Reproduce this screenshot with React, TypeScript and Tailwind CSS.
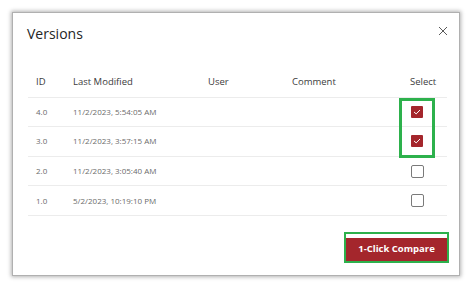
const rows = [
  { id: '4.0', modified: '11/2/2023, 5:54:05 AM', checked: true },
  { id: '3.0', modified: '11/2/2023, 3:57:15 AM', checked: true },
  { id: '2.0', modified: '11/2/2023, 3:05:40 AM', checked: false },
  { id: '1.0', modified: '5/2/2023, 10:19:10 PM', checked: false },
];

const grid = 'grid grid-cols-[45px_135px_84px_108px_1fr] items-center h-[29.6px] border-b border-[#ececec]';

function Checkbox({ checked }: { checked: boolean }) {
  if (checked) {
    return (
      <div className="w-[12px] h-[12px] rounded-[1px] bg-[#a4262c] flex items-center justify-center">
        <svg width="8" height="8" viewBox="0 0 8 8" fill="none">
          <path d="M1.3 4.2 L3.2 5.9 L6.7 2.3" stroke="#fff" strokeWidth="1" strokeLinecap="round" strokeLinejoin="round" />
        </svg>
      </div>
    );
  }
  return <div className="w-[13px] h-[13px] rounded-[2px] border-[1.5px] border-[#7a7a7a] bg-white" />;
}

export default function App() {
  return (
    <div className="w-[474px] h-[287px] bg-white pl-[12px] pt-[12px]" style={{ fontFamily: '"Open Sans", "Noto Sans", sans-serif' }}>
      <div className="relative w-[448px] h-[264px] bg-white border border-[#b0b0b0] shadow-[0_0_4px_1px_rgba(0,0,0,0.3)] pt-[11px]">
        <div className="flex items-start justify-between pl-[14px] pr-[11px]">
          <h2 className="text-[14px] leading-[20px] text-[#252525]">Versions</h2>
          <svg width="10" height="10" viewBox="0 0 10 10" className="mt-[2px]">
            <path d="M1 1 L9 9 M9 1 L1 9" stroke="#5a5a5a" strokeWidth="1" />
          </svg>
        </div>

        <div className="mt-[24px] ml-[15px] mr-[12px]">
          <div className={`${grid} text-[9.5px] text-[#3c3c3c]`}>
            <span className="pl-[8px]">ID</span>
            <span>Last Modified</span>
            <span>User</span>
            <span>Comment</span>
            <span className="pl-[10px]">Select</span>
          </div>
          {rows.map((row) => (
            <div key={row.id} className={`${grid} text-[8px] text-[#6b6b6b]`}>
              <span className="pl-[8px]">{row.id}</span>
              <span>{row.modified}</span>
              <span />
              <span />
              <span className="pl-[11px] flex">
                <Checkbox checked={row.checked} />
              </span>
            </div>
          ))}
        </div>

        <div className="flex justify-end mt-[16px] pr-[10px]">
          <div className="border-[2.5px] border-[#2db14c]">
            <button className="h-[23px] w-[101px] bg-[#a4262c] text-white text-[9.5px] font-bold">
              1-Click Compare
            </button>
          </div>
        </div>

        <div className="absolute left-[386px] top-[85px] w-[36px] h-[60px] border-[3px] border-[#2db14c]" />
      </div>
    </div>
  );
}
